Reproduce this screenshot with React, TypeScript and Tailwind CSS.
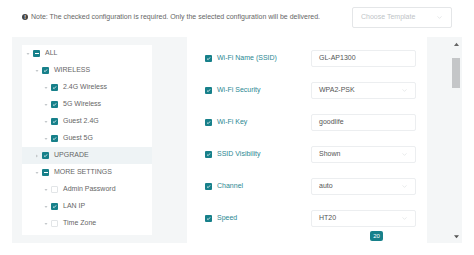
import React from 'react';
import { ChevronDown } from 'lucide-react';

type Node = { label: string; level: number; state: 'on' | 'off' | 'half'; active?: boolean };

const TREE: Node[] = [
  { label: 'ALL', level: 0, state: 'half' },
  { label: 'WIRELESS', level: 1, state: 'on' },
  { label: '2.4G Wireless', level: 2, state: 'on' },
  { label: '5G Wireless', level: 2, state: 'on' },
  { label: 'Guest 2.4G', level: 2, state: 'on' },
  { label: 'Guest 5G', level: 2, state: 'on' },
  { label: 'UPGRADE', level: 1, state: 'on', active: true },
  { label: 'MORE SETTINGS', level: 1, state: 'half' },
  { label: 'Admin Password', level: 2, state: 'off' },
  { label: 'LAN IP', level: 2, state: 'on' },
  { label: 'Time Zone', level: 2, state: 'off' },
];

const FIELDS = [
  { label: 'Wi-Fi Name (SSID)', value: 'GL-AP1300', select: false },
  { label: 'Wi-Fi Security', value: 'WPA2-PSK', select: true },
  { label: 'Wi-Fi Key', value: 'goodlife', select: false },
  { label: 'SSID Visibility', value: 'Shown', select: true },
  { label: 'Channel', value: 'auto', select: true },
  { label: 'Speed', value: 'HT20', select: true },
];

function Check({ state }: { state: 'on' | 'off' | 'half' }) {
  if (state === 'off') {
    return <span className="w-[7px] h-[7px] rounded-[1px] border border-[#e2e5e7] bg-white shrink-0" />;
  }
  return (
    <span className="w-[7px] h-[7px] rounded-[1px] bg-[#17808a] shrink-0 flex items-center justify-center">
      {state === 'on' ? (
        <svg width="5" height="5" viewBox="0 0 10 10">
          <path d="M2 5.2 L4.2 7.3 L8.2 2.8" fill="none" stroke="#fff" strokeWidth="1.6" />
        </svg>
      ) : (
        <span className="w-[4px] h-[1px] bg-white" />
      )}
    </span>
  );
}

function Caret({ right }: { right?: boolean }) {
  return (
    <svg width="4" height="4" viewBox="0 0 8 8" className="shrink-0">
      {right ? <path d="M2 1 L6 4 L2 7 Z" fill="#c3c7ca" /> : <path d="M1 2 L7 2 L4 6 Z" fill="#c3c7ca" />}
    </svg>
  );
}

export default function App() {
  return (
    <div className="w-[474px] h-[255px] bg-white relative overflow-hidden text-[7px] font-['Liberation_Sans',Arial,sans-serif] text-[#555]">
      <div className="h-[37px] flex items-center justify-between pl-[22px] pr-[22px]">
        <div className="flex items-center gap-[3px] text-[#666] -mt-[3px]">
          <span className="w-[6px] h-[6px] rounded-full bg-[#444] text-white text-[5px] leading-none flex items-center justify-center font-bold">!</span>
          <span>Note: The checked configuration is required. Only the selected configuration will be delivered.</span>
        </div>
        <div className="w-[100px] h-[21px] border border-[#e4e6e8] rounded-[2px] flex items-center justify-between px-[8px] text-[#c0c4c7] -mt-[3px]">
          <span>Choose Template</span>
          <ChevronDown size={7} strokeWidth={1.5} color="#c8cccf" />
        </div>
      </div>

      <div className="mx-[12px] h-[206px] bg-[#f4f6f7] flex">
        <div className="w-[175px] pl-[10px] pt-[8px] pr-[35px]">
          <div className="bg-white pb-[3px]">
            {TREE.map(n => (
              <div
                key={n.label}
                className={`h-[17px] flex items-center gap-[3px] ${n.active ? 'bg-[#eef3f5]' : ''}`}
                style={{ paddingLeft: 4 + n.level * 9 }}
              >
                <Caret right={n.active} />
                <Check state={n.state} />
                <span className="ml-[2px] text-[#666]">{n.label}</span>
              </div>
            ))}
          </div>
        </div>

        <div className="w-[240px] bg-white pt-[5px] pl-[18px] relative">
          {FIELDS.map(f => (
            <div key={f.label} className="h-[32px] flex items-center">
              <Check state="on" />
              <span className="ml-[5px] w-[94px] text-[#2b8893]">{f.label}</span>
              <div className="w-[105px] h-[17px] border border-[#eceef0] rounded-[2px] flex items-center justify-between px-[7px] text-[#555]">
                <span>{f.value}</span>
                {f.select && <ChevronDown size={7} strokeWidth={1.5} color="#cdd1d4" />}
              </div>
            </div>
          ))}
          <div className="absolute left-[183px] top-[194px] w-[13px] h-[10px] rounded-[2px] bg-[#17808a] text-white text-[6px] flex items-center justify-center">
            20
          </div>
        </div>

        <div className="flex-1 flex justify-end pr-[2px]">
          <div className="w-[8px] flex flex-col items-center pt-[5px] pb-[4px] justify-between">
            <div className="flex flex-col items-center w-full">
              <svg width="5" height="4" viewBox="0 0 8 6">
                <path d="M0 6 L4 1 L8 6 Z" fill="#666" />
              </svg>
              <div className="mt-[12px] w-full h-[30px] bg-[#c4c6c8]" />
            </div>
            <svg width="5" height="4" viewBox="0 0 8 6">
              <path d="M0 0 L8 0 L4 5 Z" fill="#555" />
            </svg>
          </div>
        </div>
      </div>
    </div>
  );
}
